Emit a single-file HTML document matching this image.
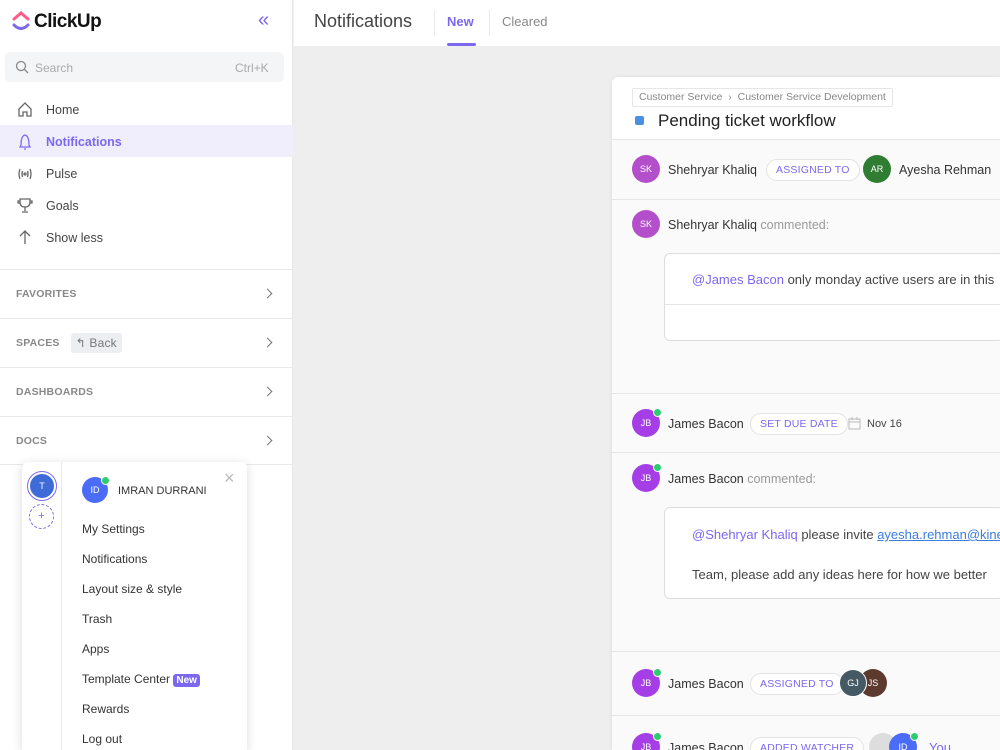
<!DOCTYPE html><html><head><style>
*{box-sizing:border-box;margin:0;padding:0}
html,body{width:1000px;height:750px;overflow:hidden}
body{font-family:"Liberation Sans",sans-serif;background:#eeeeee;position:relative;color:#333}
.a{position:absolute}
.sb{left:0;top:0;width:293px;height:750px;background:#fff;border-right:1px solid #e8e8e8}
.nav{left:0;width:293px;height:32px;display:flex;align-items:center;padding-left:46px;font-size:12.5px;color:#444}
.sec{left:0;width:293px;height:49px;border-top:1px solid #e8e8e8;display:flex;align-items:center;padding-left:16px;font-size:10.5px;font-weight:bold;color:#888;letter-spacing:.2px}
.chev{position:absolute;right:22px;top:20px;width:7px;height:7px;border-right:1.5px solid #777;border-top:1.5px solid #777;transform:rotate(45deg)}
.av{position:absolute;width:28px;height:28px;border-radius:50%;color:#fff;font-size:9px;display:flex;align-items:center;justify-content:center}
.dot{position:absolute;right:-2px;top:-1px;width:9px;height:9px;border-radius:50%;background:#2ecc71;border:1.5px solid #fff}
.pill{position:absolute;height:22px;border:1px solid #e3e3e3;border-radius:11px;background:#fff;color:#7b68ee;font-size:10.5px;padding:0 9px;line-height:20px;letter-spacing:.2px}
.nm{position:absolute;font-size:12.5px;color:#333}
.rowb{position:absolute;left:612px;width:388px;border-top:1px solid #e6e6e6}
.box{position:absolute;left:664px;width:340px;background:#fff;border:1px solid #ddd;border-radius:6px}
.mi{position:absolute;left:82px;font-size:12px;color:#333}
</style></head><body>
<div class="a sb"></div>
<svg class="a" style="left:11px;top:11px" width="20" height="22" viewBox="0 0 20 22"><path d="M3 8 L10 2 L17 8" stroke="#ff5b8a" stroke-width="3" fill="none" stroke-linecap="round"/><path d="M3 14 Q10 21 17 14" stroke="#7b68ee" stroke-width="3" fill="none" stroke-linecap="round"/></svg>
<div class="a" style="left:34px;top:11px;font-size:19px;font-weight:bold;color:#111;letter-spacing:-.5px">ClickUp</div>
<div class="a" style="left:258px;top:9px;font-size:20px;color:#7b68ee">«</div>
<div class="a" style="left:5px;top:52px;width:279px;height:30px;background:#f4f5f7;border-radius:5px"></div>
<svg class="a" style="left:15px;top:60px" width="14" height="14"><circle cx="6" cy="6" r="4.5" stroke="#888" stroke-width="1.3" fill="none"/><path d="M9.5 9.5 L13 13" stroke="#888" stroke-width="1.3"/></svg>
<div class="a" style="left:35px;top:61px;font-size:12px;color:#aaa">Search</div>
<div class="a" style="left:235px;top:61px;font-size:12px;color:#aaa">Ctrl+K</div>
<div class="a nav" style="top:94px">Home</div>
<div class="a" style="left:0;top:125px;width:293px;height:32px;background:#f0eefc"></div>
<div class="a nav" style="top:126px;color:#7b68ee;font-weight:bold">Notifications</div>
<div class="a nav" style="top:158px">Pulse</div>
<div class="a nav" style="top:190px">Goals</div>
<div class="a nav" style="top:222px">Show less</div>
<svg class="a" style="left:17px;top:101px" width="18" height="150" fill="none" stroke="#666" stroke-width="1.3"><path d="M2 8 L8 2 L14 8 V15 H10 V11 H6 V15 H2 Z"/><path d="M4 44 Q4 35 8 34 Q12 35 12 44 L13 46 H3 Z M7 48 H9" stroke="#7b68ee"/><path d="M3 68 Q1 73 3 78 M13 68 Q15 73 13 78 M5.5 70 Q4.5 73 5.5 76 M10.5 70 Q11.5 73 10.5 76"/><circle cx="8" cy="73" r="1"/><path d="M3 98 H13 V101 Q13 106 8 106 Q3 106 3 101 Z M8 106 V110 M5 111 H11 M3 100 H1 V102 H3 M13 100 H15 V102 H13"/><path d="M8 143 V130 M3 135 L8 130 L13 135"/></svg>
<div class="a sec" style="top:269px">FAVORITES<span class="chev"></span></div>
<div class="a sec" style="top:318px">SPACES<span style="margin-left:11px;background:#eceef2;border-radius:3px;padding:3px 5px;font-weight:normal;font-size:12px;color:#777">↰ Back</span><span class="chev"></span></div>
<div class="a sec" style="top:367px">DASHBOARDS<span class="chev"></span></div>
<div class="a sec" style="top:416px">DOCS<span class="chev"></span></div>
<div class="a" style="left:0;top:464px;width:293px;border-top:1px solid #e8e8e8"></div>
<div class="a" style="left:294px;top:0;width:706px;height:46px;background:#fff"></div>
<div class="a" style="left:314px;top:11px;font-size:18px;color:#444">Notifications</div>
<div class="a" style="left:434px;top:10px;height:26px;border-left:1px solid #e8e8e8"></div>
<div class="a" style="left:447px;top:14px;font-size:13px;color:#7b68ee;font-weight:bold">New</div>
<div class="a" style="left:447px;top:43px;width:29px;height:3px;background:#7b68ee;border-radius:2px"></div>
<div class="a" style="left:489px;top:10px;height:26px;border-left:1px solid #e8e8e8"></div>
<div class="a" style="left:502px;top:14px;font-size:13px;color:#888">Cleared</div>
<div class="a" style="left:612px;top:77px;width:388px;height:673px;background:#fafafa;border-radius:6px 0 0 0;box-shadow:0 0 4px rgba(0,0,0,.08)"></div>
<div class="a" style="left:612px;top:77px;width:388px;height:62px;background:#fff;border-radius:6px 0 0 0"></div>
<div class="a" style="left:632px;top:88px;height:19px;border:1px solid #e6e6e6;border-radius:2px;padding:0 6px;font-size:10.5px;color:#888;line-height:17px">Customer Service &nbsp;›&nbsp; Customer Service Development</div>
<div class="a" style="left:635px;top:116px;width:9px;height:9px;background:#4a90e2;border-radius:2px"></div>
<div class="a" style="left:658px;top:111px;font-size:17px;color:#222">Pending ticket workflow</div>
<div class="rowb" style="top:139px"></div>
<div class="av" style="left:632px;top:155px;background:#b44fcb">SK</div>
<div class="nm" style="left:668px;top:163px">Shehryar Khaliq</div>
<div class="pill" style="left:766px;top:159px">ASSIGNED TO</div>
<div class="av" style="left:863px;top:155px;background:#2e7d32">AR</div>
<div class="nm" style="left:899px;top:163px">Ayesha Rehman</div>
<div class="rowb" style="top:199px"></div>
<div class="av" style="left:632px;top:210px;background:#b44fcb">SK</div>
<div class="nm" style="left:668px;top:218px">Shehryar Khaliq <span style="color:#999">commented:</span></div>
<div class="box" style="top:253px;height:88px"><div style="height:51px;border-bottom:1px solid #e6e6e6;padding:18px 0 0 27px;font-size:13px;color:#444;white-space:nowrap"><span style="color:#7b68ee">@James Bacon</span> only monday active users are in this</div></div>
<div class="rowb" style="top:393px"></div>
<div class="av" style="left:632px;top:409px;background:#a53ee6">JB<span class="dot"></span></div>
<div class="nm" style="left:668px;top:417px">James Bacon</div>
<div class="pill" style="left:750px;top:413px">SET DUE DATE</div>
<svg class="a" style="left:848px;top:417px" width="13" height="13" fill="none" stroke="#bbb"><rect x="1" y="2" width="11" height="10"/><path d="M1 5 H12 M4 0 V3 M9 0 V3"/></svg>
<div class="a" style="left:867px;top:418px;font-size:11px;color:#444">Nov 16</div>
<div class="rowb" style="top:452px"></div>
<div class="av" style="left:632px;top:464px;background:#a53ee6">JB<span class="dot"></span></div>
<div class="nm" style="left:668px;top:472px">James Bacon <span style="color:#999">commented:</span></div>
<div class="box" style="top:507px;height:92px;padding:17px 0 0 27px;font-size:13px;color:#444;white-space:nowrap;line-height:20px"><span style="color:#7b68ee">@Shehryar Khaliq</span> please invite <span style="color:#3b7ddd;text-decoration:underline">ayesha.rehman@kinetic</span><div style="margin-top:20px">Team, please add any ideas here for how we better</div></div>
<div class="rowb" style="top:651px"></div>
<div class="av" style="left:632px;top:669px;background:#a53ee6">JB<span class="dot"></span></div>
<div class="nm" style="left:668px;top:677px">James Bacon</div>
<div class="pill" style="left:750px;top:673px">ASSIGNED TO</div>
<div class="av" style="left:859px;top:669px;background:#5d3a2e">JS</div>
<div class="av" style="left:839px;top:669px;background:#455a64;border:1px solid #fff">GJ</div>
<div class="rowb" style="top:715px"></div>
<div class="av" style="left:632px;top:733px;background:#a53ee6">JB<span class="dot"></span></div>
<div class="nm" style="left:668px;top:741px">James Bacon</div>
<div class="pill" style="left:750px;top:737px">ADDED WATCHER</div>
<div class="av" style="left:869px;top:733px;background:#ddd"></div>
<div class="av" style="left:889px;top:733px;background:#4a6cf7">ID<span class="dot"></span></div>
<div class="a" style="left:929px;top:740px;font-size:13px;color:#7b68ee">You</div>
<div class="a" style="left:22px;top:462px;width:225px;height:288px;background:#fff;border-radius:6px 6px 0 0;box-shadow:0 2px 10px rgba(0,0,0,.15)"></div>
<div class="a" style="left:61px;top:462px;height:288px;border-left:1px solid #e8e8e8"></div>
<div class="a" style="left:27px;top:471px;width:30px;height:30px;border-radius:50%;border:1.5px solid #7b68ee;padding:2px"><div style="width:100%;height:100%;border-radius:50%;background:#3f6bd8;color:#fff;font-size:9px;display:flex;align-items:center;justify-content:center">T</div></div>
<div class="a" style="left:29px;top:504px;width:25px;height:25px;border-radius:50%;border:1px dashed #7b68ee;color:#7b68ee;font-size:11px;text-align:center;line-height:23px">+</div>
<div class="av" style="left:82px;top:477px;width:26px;height:26px;background:#4a6cf7">ID<span class="dot"></span></div>
<div class="a" style="left:118px;top:485px;font-size:11px;color:#333">IMRAN DURRANI</div>
<div class="a" style="left:224px;top:469px;font-size:18px;color:#bbb;line-height:18px">×</div>
<div class="mi" style="top:522px">My Settings</div>
<div class="mi" style="top:552px">Notifications</div>
<div class="mi" style="top:582px">Layout size &amp; style</div>
<div class="mi" style="top:612px">Trash</div>
<div class="mi" style="top:642px">Apps</div>
<div class="mi" style="top:672px">Template Center <span style="background:#7b68ee;color:#fff;font-weight:bold;font-size:10px;padding:1px 3px;border-radius:3px">New</span></div>
<div class="mi" style="top:702px">Rewards</div>
<div class="mi" style="top:732px">Log out</div>
</body></html>
